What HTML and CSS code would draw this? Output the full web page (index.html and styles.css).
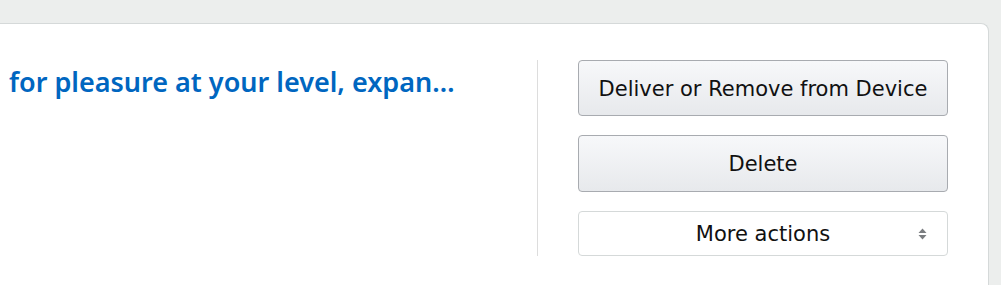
FILE: index.html
```html
<!DOCTYPE html>
<html>
<head>
<meta charset="utf-8">
<link rel="stylesheet" href="styles.css">
</head>
<body>
<div class="page">
  <div class="card">
    <div class="info">
      <a class="title" href="#">for pleasure at your level, expan…</a>
    </div>
    <div class="actions">
      <button class="btn">Deliver or Remove from Device</button>
      <button class="btn">Delete</button>
      <div class="select">
        <span class="select-label">More actions</span>
        <svg class="select-arrows" width="9" height="12" viewBox="0 0 9 12">
          <path d="M4.5 0.5 L8.5 5 L0.5 5 Z" fill="#7a7d80"/>
          <path d="M4.5 11.5 L8.5 7 L0.5 7 Z" fill="#7a7d80"/>
        </svg>
      </div>
    </div>
  </div>
</div>
</body>
</html>
```

FILE: styles.css
```css
html, body {
  margin: 0;
  padding: 0;
}
body {
  background: #eceeed;
  font-family: "DejaVu Sans", "Noto Sans", sans-serif;
  overflow: hidden;
  height: 285px;
}
.page {
  padding-top: 23px;
  padding-right: 12px;
}
.card {
  margin-left: -12px;
  background: #fff;
  border: 1px solid #d5d9d9;
  border-bottom: none;
  border-radius: 8px 8px 0 0;
  height: 262px;
  display: flex;
  box-sizing: border-box;
  padding-top: 36px;
}
.info {
  width: 548px;
  padding-left: 20px;
  box-sizing: border-box;
}
.title {
  display: block;
  color: #0066c0;
  font-family: "Noto Sans", "Open Sans", sans-serif;
  font-weight: 600;
  font-size: 27px;
  line-height: 30px;
  padding-top: 7px;
  text-decoration: none;
  white-space: nowrap;
}
.actions {
  border-left: 1px solid #dddddd;
  height: 196px;
  padding-left: 40px;
  display: flex;
  flex-direction: column;
  gap: 19px;
}
.btn {
  width: 370px;
  height: 57px;
  box-sizing: border-box;
  border: 1px solid #a8abb0;
  border-radius: 4px;
  background: linear-gradient(to bottom, #f7f8fa, #e7e9ec);
  font-family: inherit;
  font-size: 21px;
  color: #111;
  padding: 2px 0 0;
}
.select {
  width: 370px;
  height: 46px;
  box-sizing: border-box;
  border: 1px solid #d5d9d9;
  border-radius: 4px;
  background: #fff;
  display: flex;
  align-items: center;
  justify-content: center;
  position: relative;
  font-size: 21px;
  color: #111;
  padding-top: 2px;
}
.select-arrows {
  position: absolute;
  right: 20px;
  top: 16px;
}
```
